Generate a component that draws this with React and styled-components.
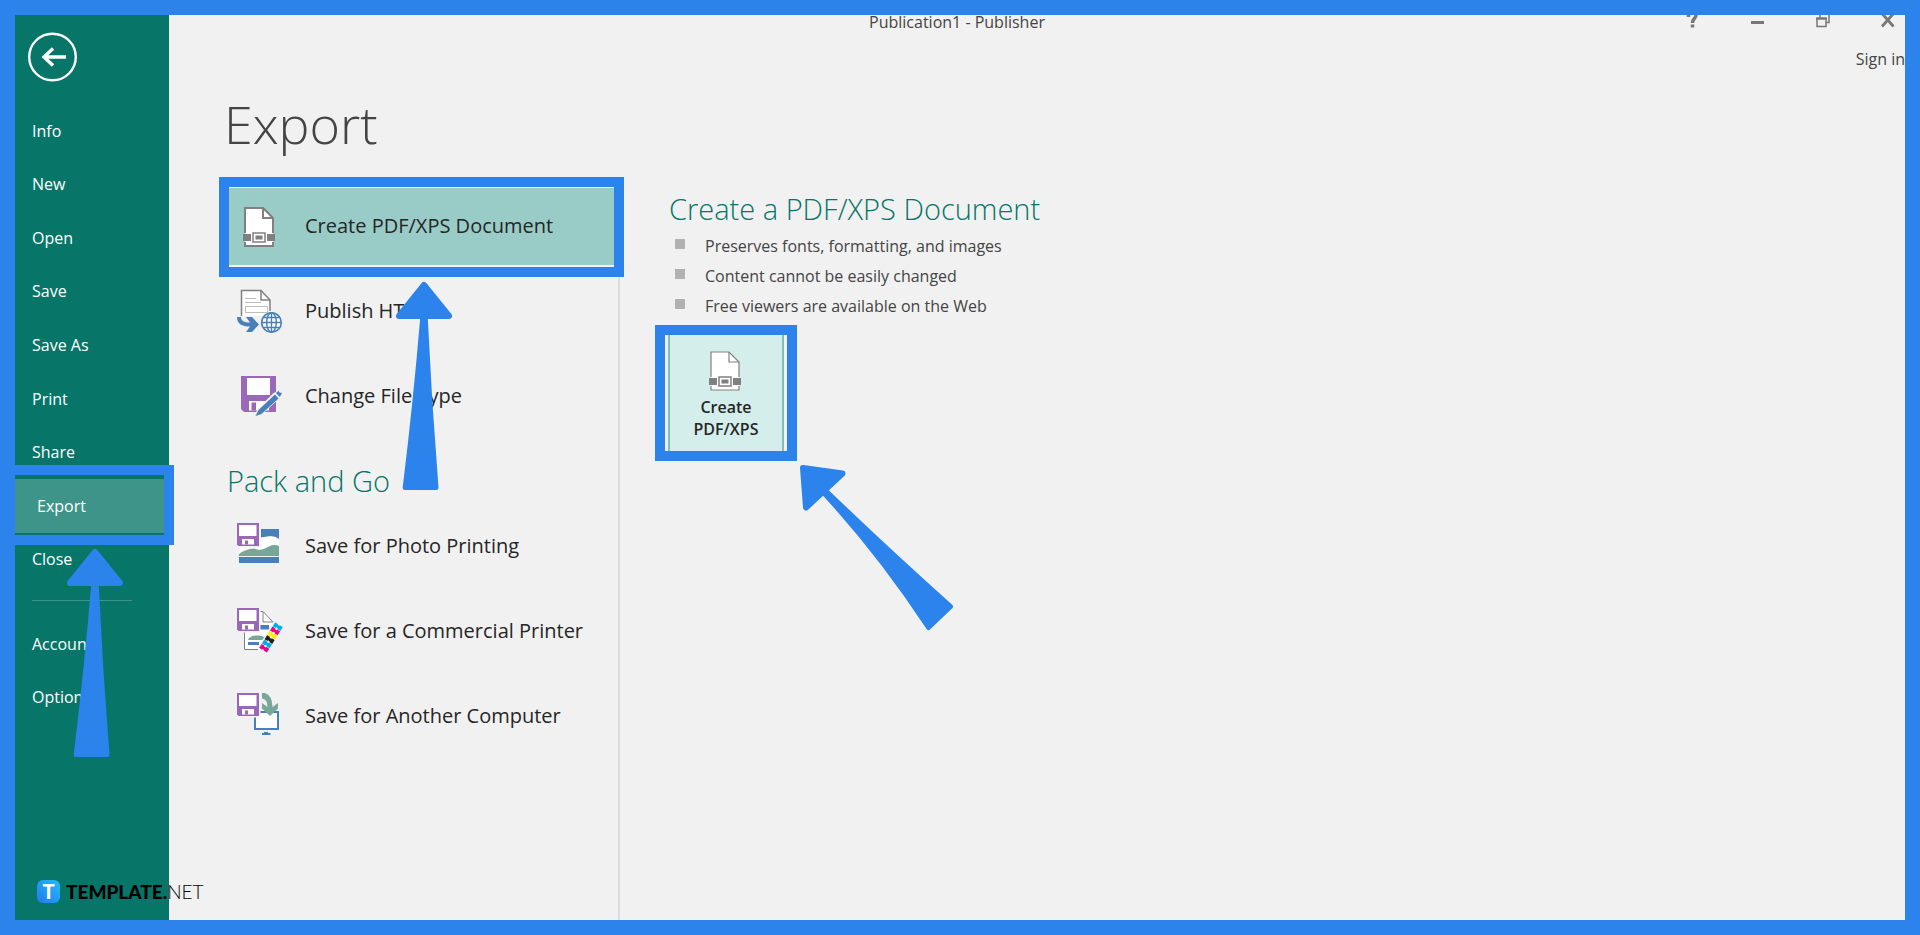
import React, { useState } from 'react';
import styled, { createGlobalStyle } from 'styled-components';

const BLUE = '#2c83ec';
const TEAL = '#077568';
const ICON_GRAY = '#808080';
const ICON_BLUE = '#4a80b9';
const ICON_GREEN = '#77a897';
const ICON_PURPLE = '#9968b9';

const mainMenu = ['Info', 'New', 'Open', 'Save', 'Save As', 'Print', 'Share', 'Export', 'Close'];
const accountMenu = ['Account', 'Options'];
const benefits = [
  'Preserves fonts, formatting, and images',
  'Content cannot be easily changed',
  'Free viewers are available on the Web',
];
const inkStrip = ['#00aeef', '#ec008c', '#fff200', '#231f20', '#00aeef', '#ec008c'];

function DocumentIcon({ line = 2 }) {
  return (
    <Icon viewBox="0 0 46 44">
      <path d="M8 4H26L36 14V42H8Z" fill="#fff" />
      <path d="M8 29V4H26L36 14V29M8 38V42H36V38" fill="none" stroke={ICON_GRAY} strokeWidth={line} />
      <path d="M26 4V14H36" fill="none" stroke={ICON_GRAY} strokeWidth={line} />
      <path d="M6 30H14V37H6ZM30 30H38V37H30Z" fill={ICON_GRAY} />
      <rect x="16" y="29" width="12" height="9" fill="#fff" stroke={ICON_GRAY} strokeWidth="1.5" />
      <rect x="18.5" y="31.5" width="7" height="4" fill={ICON_GRAY} />
    </Icon>
  );
}

function PublishIcon() {
  return (
    <Icon viewBox="0 0 46 44">
      <path d="M4.5 2.5H24L33 12V28H4.5Z" fill="#fff" />
      <path d="M4.5 28V2.5H24L33 12V23" fill="none" stroke={ICON_GRAY} strokeWidth="1.5" />
      <path d="M24 2.5V12H33" fill="none" stroke={ICON_GRAY} strokeWidth="1.5" />
      <path d="M8 10.5H19M8 14.5H24M8.5 18.5H30.5V24.5H8.5Z" fill="none" stroke="#bdbdbd" />
      <path d="M0 29H4C4 33 7 34.5 13 34.5L9 29H15L22 36.5L15 44H9L13 38.5C5 38.5 0 36 0 29Z" fill={ICON_BLUE} />
      <circle cx="34.5" cy="34.5" r="9.8" fill="#fff" stroke={ICON_BLUE} strokeWidth="1.6" />
      <ellipse cx="34.5" cy="34.5" rx="4.8" ry="9.8" fill="none" stroke={ICON_BLUE} strokeWidth="1.4" />
      <path d="M25 34.5H44M34.5 25V44M27 29.5H42M27 39.5H42" stroke={ICON_BLUE} strokeWidth="1.4" />
    </Icon>
  );
}

function FileTypeIcon() {
  return (
    <Icon viewBox="0 0 46 44">
      <path d="M4 3H39V39H7L4 36Z" fill={ICON_PURPLE} />
      <path d="M10 5H33V22H10ZM12 28H32V37.5H12Z" fill="#fff" />
      <path d="M14.5 29.5H19V37.5H14.5Z" fill={ICON_PURPLE} />
      <path d="M17.5 43.5L20.5 36L36 20.5L40 18L45.5 20L43 25L26 40.5Z" fill="#f1f1f1" />
      <path d="M18.5 43L21.5 37L38 21.5L41.5 25.5L24.5 41Z" fill={ICON_BLUE} />
      <path d="M39 20L41.5 17.8L42.5 19.5L45 20L42.8 24Z" fill={ICON_BLUE} />
    </Icon>
  );
}

function SmallDisk() {
  return (
    <>
      <path d="M-1 -1H23.5V24.5H-1Z" fill="#f1f1f1" />
      <path d="M0 0H22V23H1.5L0 21.5Z" fill={ICON_PURPLE} />
      <path d="M2 2H19.5V13H2ZM5 16H17V21.5H5Z" fill="#fff" />
      <path d="M8 17.5H11V21.5H8Z" fill={ICON_PURPLE} />
    </>
  );
}

function PhotoIcon() {
  return (
    <Icon viewBox="0 0 46 44">
      <path d="M2 14H42V33H2Z" fill="#fff" />
      <path d="M24 6H42V16Q37 12 30 13.5L24 14.5Z" fill={ICON_BLUE} />
      <path d="M2 33V31Q8 26 17 25.5L22 27Q28 26 32 23.5Q37 21 42 23V33Z" fill={ICON_GREEN} />
      <path d="M2 34H42V40H2Z" fill={ICON_BLUE} />
      <SmallDisk />
    </Icon>
  );
}

function CommercialIcon() {
  return (
    <Icon viewBox="0 0 46 44">
      <path d="M7.5 3.5H26L36 14V20L23 41.5H7.5Z" fill="#fff" />
      <path d="M22 3.5H26L36 14H26V4M7.5 22V41.5H21" fill="none" stroke={ICON_GRAY} />
      <path d="M22 17H32V21.5H22ZM11 34H22V37H11Z" fill={ICON_BLUE} />
      <path d="M11 32Q13 27 20 27.5Q25 27 27 29V32Z" fill={ICON_GREEN} />
      <g transform="translate(40.7 18.7) rotate(32)">
        <rect x="-6" y="-3" width="11.5" height="31" fill="#f1f1f1" />
        {inkStrip.map((color, i) => (
          <path
            key={i}
            transform={`translate(0 ${i * 5.1})`}
            d="M-4.5 -2.4H-1V-1.6H1V-2.4H4.5V2.2H1V1.4H-1V2.2H-4.5Z"
            fill={color}
          />
        ))}
      </g>
      <SmallDisk />
    </Icon>
  );
}

function ComputerIcon() {
  return (
    <Icon viewBox="0 0 46 44">
      <rect x="18" y="19" width="23" height="17" fill="#fff" stroke={ICON_BLUE} strokeWidth="2" />
      <path d="M27 39H31V40H33.5V42H25V40H27Z" fill={ICON_BLUE} />
      <path d="M25 0H28Q35 2 35.5 14L41 10V15.5L33 23L25 15.5V10L30.5 14Q30.5 6 25 5.5Z" fill={ICON_GREEN} />
      <SmallDisk />
    </Icon>
  );
}

function UpArrow() {
  return (
    <svg width="58" height="210" viewBox="0 0 58 210" fill={BLUE} stroke={BLUE} strokeLinejoin="round" aria-hidden="true">
      <path d="M29 4L54 35H4Z" strokeWidth="6" />
      <path d="M27.8 36Q20.6 122 10.2 206.5H41Q34.2 122 30.2 36Z" strokeWidth="5" />
    </svg>
  );
}

function DiagonalArrow() {
  return (
    <svg width="156" height="170" viewBox="0 0 156 170" fill={BLUE} stroke={BLUE} strokeLinejoin="round" aria-hidden="true">
      <path d="M4 4L43.5 9.5L7 43.5Z" strokeWidth="6" />
      <path d="M27 27Q86 84 151.5 142.5L129.5 163.5Q82 91 25 29Z" strokeWidth="5" />
    </svg>
  );
}

function App() {
  const [page, setPage] = useState('Export');

  return (
    <Window>
      <GlobalStyle />
      <Sidebar>
        <BackButton aria-label="Back">
          <svg width="49" height="50" viewBox="0 0 49 50">
            <circle cx="24.5" cy="25" r="23.3" fill="none" stroke="#fff" strokeWidth="2.4" />
            <path d="M38 25H15.500M25 16.500L16 25L25 33.500" fill="none" stroke="#fff" strokeWidth="3.4" />
          </svg>
        </BackButton>
        <Menu $height={482}>
          {mainMenu.map((name) => (
            <MenuItem key={name}>
              <MenuButton $active={name === page} onClick={() => setPage(name)}>
                {name}
              </MenuButton>
              {name === page && (
                <MenuHighlight>
                  <ArrowSpot $left={51} $top={73}>
                    <UpArrow />
                  </ArrowSpot>
                </MenuHighlight>
              )}
            </MenuItem>
          ))}
        </Menu>
        <MenuDivider />
        <Menu $height={107}>
          {accountMenu.map((name) => (
            <MenuItem key={name}>
              <MenuButton>{name}</MenuButton>
            </MenuItem>
          ))}
        </Menu>
      </Sidebar>

      <Main>
        <TitleBar>
          <DocumentName>Publication1 - Publisher</DocumentName>
          <WindowControls>
            <ControlButton aria-label="Help">
              <svg width="14" height="14" viewBox="0 0 14 14">
                <path d="M2.5 0V2M10 0C10 4 6.5 3 6.5 8M6.5 9.5V12.5" fill="none" stroke="#777" strokeWidth="3.5" />
              </svg>
            </ControlButton>
            <ControlButton aria-label="Minimize">
              <svg width="14" height="14" viewBox="0 0 14 14">
                <path d="M0 6H13V9H0Z" fill="#777" />
              </svg>
            </ControlButton>
            <ControlButton aria-label="Restore">
              <svg width="14" height="14" viewBox="0 0 14 14">
                <path d="M1 3H10V11.5H1ZM0 4H11M4 0V3M13 0V7.5H10" fill="none" stroke="#777" strokeWidth="1.5" />
              </svg>
            </ControlButton>
            <ControlButton aria-label="Close">
              <svg width="14" height="14" viewBox="0 0 14 14">
                <path d="M1 11.5L12.5 -1.500M12.500 11.5L1 -1.500" fill="none" stroke="#777" strokeWidth="2.8" />
              </svg>
            </ControlButton>
          </WindowControls>
        </TitleBar>
        <SignIn href="#signin">Sign in</SignIn>
        <PageTitle>Export</PageTitle>

        <Columns>
          <Options>
            <OptionHighlight>
              <OptionButton $selected>
                <DocumentIcon />
                Create PDF/XPS Document
              </OptionButton>
              <ArrowSpot $left={166} $top={94}>
                <UpArrow />
              </ArrowSpot>
            </OptionHighlight>
            <OptionList>
              <OptionButton>
                <PublishIcon />
                Publish HTML
              </OptionButton>
              <OptionButton>
                <FileTypeIcon />
                Change File Type
              </OptionButton>
            </OptionList>
            <GroupTitle>Pack and Go</GroupTitle>
            <OptionList>
              <OptionButton>
                <PhotoIcon />
                Save for Photo Printing
              </OptionButton>
              <OptionButton>
                <CommercialIcon />
                Save for a Commercial Printer
              </OptionButton>
              <OptionButton>
                <ComputerIcon />
                Save for Another Computer
              </OptionButton>
            </OptionList>
          </Options>

          <Details>
            <DetailsTitle>Create a PDF/XPS Document</DetailsTitle>
            <Benefits>
              {benefits.map((text) => (
                <Benefit key={text}>{text}</Benefit>
              ))}
            </Benefits>
            <CreateHighlight>
              <CreateButton>
                <DocumentIcon line={1.2} />
                <span>
                  Create
                  <br />
                  PDF/XPS
                </span>
              </CreateButton>
              <ArrowSpot $left={134} $top={129}>
                <DiagonalArrow />
              </ArrowSpot>
            </CreateHighlight>
          </Details>
        </Columns>
      </Main>

      <Brand>
        <BrandTile>T</BrandTile>
        <BrandName>
          <b>TEMPLATE.</b>NET
        </BrandName>
      </Brand>
    </Window>
  );
}

const GlobalStyle = createGlobalStyle`
  * {
    box-sizing: border-box;
  }

  body {
    margin: 0;
    font-family: 'Open Sans', 'Noto Sans', sans-serif;
    font-size: 16px;
    color: #262626;
  }

  button {
    padding: 0;
    border: 0;
    background: none;
    font: inherit;
    color: inherit;
    cursor: pointer;
  }

  svg {
    display: block;
  }
`;

const Window = styled.div`
  position: relative;
  display: flex;
  min-height: 100vh;
  border: 15px solid ${BLUE};
  background: #f1f1f1;
  overflow: hidden;
`;

const Sidebar = styled.aside`
  position: relative;
  z-index: 1;
  flex: 0 0 154px;
  padding-top: 17px;
  background: ${TEAL};
  color: #fff;
`;

const BackButton = styled.button`
  display: block;
  margin: 0 0 22px 13px;
`;

const Menu = styled.ul`
  display: flex;
  flex-direction: column;
  height: ${({ $height }) => $height}px;
  margin: 0;
  padding: 0;
  list-style: none;
`;

const MenuItem = styled.li`
  position: relative;
  display: flex;
  flex: 1;
`;

const MenuButton = styled.button`
  flex: 1;
  padding-left: ${({ $active }) => ($active ? 22 : 17)}px;
  background: ${({ $active }) => ($active ? '#3f9489' : 'none')};
  font-weight: 500;
  text-align: left;
`;

const MenuHighlight = styled.div`
  position: absolute;
  z-index: 1;
  top: -14px;
  left: 0;
  right: -5px;
  height: 80px;
  border: 10px solid ${BLUE};
  border-left: 0;
  pointer-events: none;
`;

const ArrowSpot = styled.div`
  position: absolute;
  z-index: 2;
  left: ${({ $left }) => $left}px;
  top: ${({ $top }) => $top}px;
  pointer-events: none;
`;

const MenuDivider = styled.hr`
  width: 100px;
  height: 1px;
  margin: 14px 0 16px 17px;
  border: 0;
  background: #3f9489;
`;

const Main = styled.main`
  display: flex;
  flex: 1;
  flex-direction: column;
  min-width: 0;
`;

/* reaches under the sidebar so the name is centred on the whole window */
const TitleBar = styled.header`
  display: grid;
  grid-template-columns: 1fr auto 1fr;
  height: 14px;
  margin-left: -160px;
  color: #444;
`;

const DocumentName = styled.span`
  grid-column: 2;
  line-height: 14px;
`;

const WindowControls = styled.div`
  display: flex;
  justify-content: flex-end;
  gap: 31px;
`;

const ControlButton = styled.button`
  display: flex;
  justify-content: center;
  width: 34px;
`;

const SignIn = styled.a`
  align-self: flex-end;
  margin-top: 20px;
  line-height: 20px;
  color: #444;
  text-decoration: none;
`;

const PageTitle = styled.h1`
  margin: 19px 0 17px 55px;
  font-size: 52px;
  font-weight: 300;
  line-height: 72px;
  color: #444;
`;

const Columns = styled.div`
  display: flex;
  flex: 1;
`;

const Options = styled.section`
  flex: 0 0 451px;
  min-width: 0;
  padding-left: 50px;
  border-right: 2px solid #dedede;
`;

const OptionHighlight = styled.div`
  position: relative;
  width: 405px;
  border: 10px solid ${BLUE};
`;

const OptionList = styled.div`
  display: flex;
  flex-direction: column;
  gap: 17px;
`;

const OptionButton = styled.button`
  display: flex;
  align-items: center;
  gap: 22px;
  width: 100%;
  height: ${({ $selected }) => ($selected ? 80 : 68)}px;
  padding-bottom: 2px;
  padding-left: ${({ $selected }) => ($selected ? 8 : 18)}px;
  border: solid #f1f1f1;
  border-width: ${({ $selected }) => ($selected ? '1px 0 2px' : '0')};
  background: ${({ $selected }) => ($selected ? '#99ccc6' : 'none')};
  font-size: 20px;
  white-space: nowrap;
`;

const Icon = styled.svg.attrs({ 'aria-hidden': true })`
  flex: none;
  width: 46px;
  height: 44px;
  overflow: visible;
`;

const GroupTitle = styled.h2`
  margin: 31px 0 11px 8px;
  font-size: 29px;
  font-weight: 300;
  line-height: 40px;
  color: ${TEAL};
`;

const Details = styled.section`
  flex: 1;
  padding: 12px 0 0 35px;
`;

const DetailsTitle = styled.h2`
  margin: 0 0 2px 14px;
  font-size: 29px;
  font-weight: 300;
  line-height: 40px;
  color: ${TEAL};
`;

const Benefits = styled.ul`
  margin: 0 0 4px;
  padding: 0 0 0 20px;
  list-style: none;
`;

const Benefit = styled.li`
  display: flex;
  align-items: center;
  gap: 20px;
  line-height: 30px;
  color: #444;

  &::before {
    content: '';
    width: 10px;
    height: 10px;
    margin-bottom: 4px;
    background: #b1b1b1;
  }
`;

const CreateHighlight = styled.div`
  position: relative;
  width: 142px;
  border: 10px solid ${BLUE};
`;

const CreateButton = styled.button`
  display: flex;
  flex-direction: column;
  align-items: center;
  gap: 4px;
  width: 116px;
  height: 116px;
  margin: 0 3px;
  padding-top: 13px;
  border: solid #80bdb4;
  border-width: 0 2px;
  background: #d4efeb;
  font-weight: 600;
  line-height: 22px;
`;

const Brand = styled.div`
  position: absolute;
  z-index: 2;
  left: 22px;
  bottom: 17px;
  display: flex;
  align-items: center;
  gap: 6px;
  color: #000;
`;

const BrandTile = styled.span`
  width: 23px;
  height: 23px;
  border-radius: 6px;
  background: linear-gradient(45deg, #2377ee, #1fc0fa);
  color: #fff;
  font-family: Lato, sans-serif;
  font-size: 20px;
  font-weight: 900;
  line-height: 23px;
  text-align: center;
`;

const BrandName = styled.span`
  font-family: Lato, sans-serif;
  font-size: 19px;
  font-weight: 300;
  line-height: 23px;

  b {
    font-weight: 900;
  }
`;

export default App;
